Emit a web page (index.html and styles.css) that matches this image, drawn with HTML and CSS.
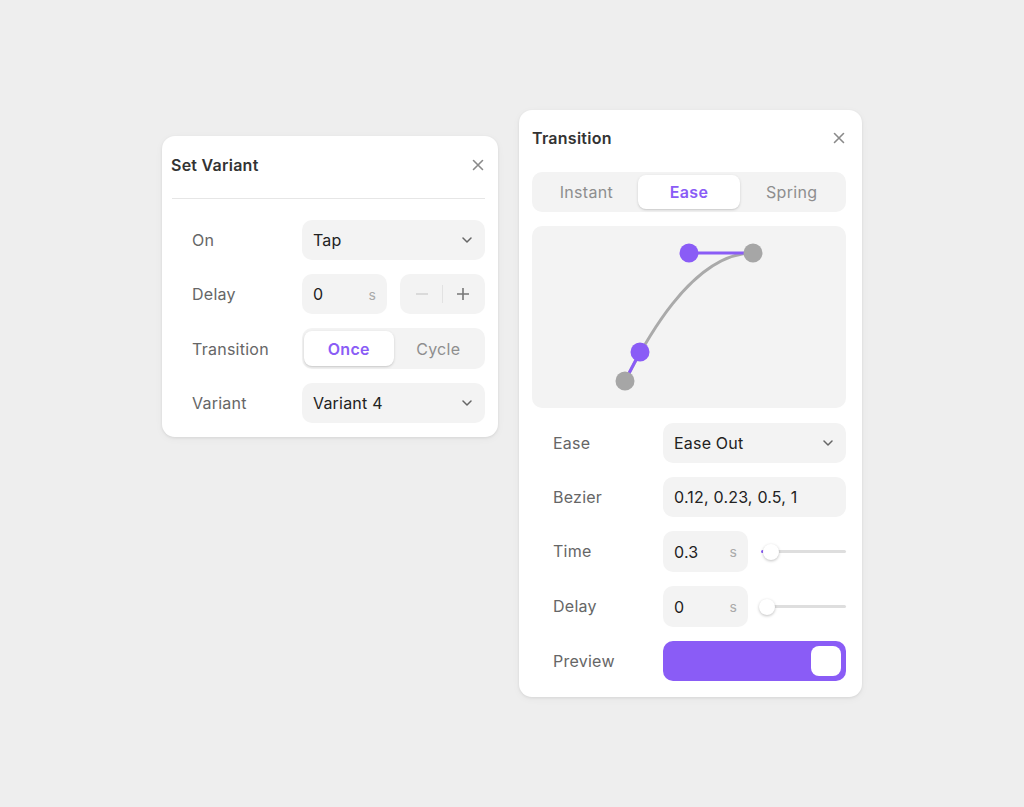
FILE: index.html
```html
<!DOCTYPE html>
<html>
<head>
<meta charset="utf-8">
<link rel="stylesheet" href="styles.css">
</head>
<body>
<div class="stage">
  <div class="panel panel-left">
    <div class="header header-left">
      <div class="title">Set Variant</div>
      <svg class="close" width="12" height="12" viewBox="0 0 12 12"><path d="M1.5 1.5L10.5 10.5M10.5 1.5L1.5 10.5" stroke="#8a8a8a" stroke-width="1.6" stroke-linecap="round"/></svg>
    </div>
    <div class="divider"></div>
    <div class="rows rows-left">
      <div class="row">
        <div class="label">On</div>
        <div class="field select"><span>Tap</span><svg class="chev" width="10" height="6" viewBox="0 0 10 6"><path d="M1 1L5 5L9 1" stroke="#666" stroke-width="1.5" fill="none" stroke-linecap="round" stroke-linejoin="round"/></svg></div>
      </div>
      <div class="row">
        <div class="label">Delay</div>
        <div class="pair">
          <div class="field num"><span>0</span><span class="unit">s</span></div>
          <div class="field stepper">
            <svg width="14" height="14" viewBox="0 0 14 14"><path d="M1 7H13" stroke="#d2d2d2" stroke-width="1.5"/></svg>
            <div class="vsep"></div>
            <svg width="14" height="14" viewBox="0 0 14 14"><path d="M1 7H13M7 1V13" stroke="#777" stroke-width="1.6"/></svg>
          </div>
        </div>
      </div>
      <div class="row row-tall">
        <div class="label">Transition</div>
        <div class="seg seg2">
          <div class="seg-item active">Once</div>
          <div class="seg-item">Cycle</div>
        </div>
      </div>
      <div class="row">
        <div class="label">Variant</div>
        <div class="field select"><span>Variant 4</span><svg class="chev" width="10" height="6" viewBox="0 0 10 6"><path d="M1 1L5 5L9 1" stroke="#666" stroke-width="1.5" fill="none" stroke-linecap="round" stroke-linejoin="round"/></svg></div>
      </div>
    </div>
  </div>

  <div class="panel panel-right">
    <div class="header header-right">
      <div class="title">Transition</div>
      <svg class="close" width="12" height="12" viewBox="0 0 12 12"><path d="M1.5 1.5L10.5 10.5M10.5 1.5L1.5 10.5" stroke="#8a8a8a" stroke-width="1.6" stroke-linecap="round"/></svg>
    </div>
    <div class="seg seg3">
      <div class="seg-item">Instant</div>
      <div class="seg-item active">Ease</div>
      <div class="seg-item">Spring</div>
    </div>
    <div class="curve">
      <svg width="314" height="182" viewBox="0 0 314 182">
        <path d="M93 155C108 126 157 27 221 27" stroke="#aaaaaa" stroke-width="3" fill="none"/>
        <path d="M93 155L108 126" stroke="#8a5cf6" stroke-width="3"/>
        <path d="M221 27L157 27" stroke="#8a5cf6" stroke-width="3"/>
        <circle cx="93" cy="155" r="9.5" fill="#a6a6a6"/>
        <circle cx="221" cy="27" r="9.5" fill="#a6a6a6"/>
        <circle cx="108" cy="126" r="9.5" fill="#8a5cf6"/>
        <circle cx="157" cy="27" r="9.5" fill="#8a5cf6"/>
      </svg>
    </div>
    <div class="rows rows-right">
      <div class="row">
        <div class="label">Ease</div>
        <div class="field select"><span>Ease Out</span><svg class="chev" width="10" height="6" viewBox="0 0 10 6"><path d="M1 1L5 5L9 1" stroke="#666" stroke-width="1.5" fill="none" stroke-linecap="round" stroke-linejoin="round"/></svg></div>
      </div>
      <div class="row">
        <div class="label">Bezier</div>
        <div class="field"><span>0.12, 0.23, 0.5, 1</span></div>
      </div>
      <div class="row row-tall">
        <div class="label">Time</div>
        <div class="pair">
          <div class="field num"><span>0.3</span><span class="unit">s</span></div>
          <div class="slider"><div class="fill"></div><div class="thumb"></div><div class="track"></div></div>
        </div>
      </div>
      <div class="row row-tall">
        <div class="label">Delay</div>
        <div class="pair">
          <div class="field num"><span>0</span><span class="unit">s</span></div>
          <div class="slider slider-zero"><div class="thumb"></div><div class="track"></div></div>
        </div>
      </div>
      <div class="row">
        <div class="label">Preview</div>
        <div class="preview"><div class="knob"></div></div>
      </div>
    </div>
  </div>
</div>
</body>
</html>
```

FILE: styles.css
```css
* { box-sizing: border-box; }
html, body { margin: 0; padding: 0; }
body {
  background: #eeeeee;
  width: 1024px;
  height: 807px;
  font-family: Inter, "Noto Sans", sans-serif;
  color: #222;
  overflow: hidden;
}
.stage {
  display: flex;
  align-items: flex-start;
  padding: 110px 0 0 162px;
  gap: 21px;
}
.panel {
  background: #fff;
  border-radius: 13px;
  box-shadow: 0 1px 3px rgba(0,0,0,0.08), 0 2px 8px rgba(0,0,0,0.04);
}
.panel-left {
  width: 336px;
  margin-top: 26px;
  padding: 0 13px 14px 10px;
}
.panel-right {
  width: 343px;
  padding: 0 16px 16px 13px;
}
.header {
  display: flex;
  align-items: center;
  justify-content: space-between;
}
.header-left { height: 62px; padding-right: 1px; }
.header-right { height: 62px; padding-bottom: 6px; padding-right: 1px; }
.title {
  font-size: 16px;
  font-weight: 600;
  color: #333;
  letter-spacing: 0.25px;
}
.header-left .title { margin-top: -4px; margin-left: -1px; }
.header-left .close { margin-top: -4px; }
.divider { height: 1px; background: #e6e6e6; }
.rows { display: flex; flex-direction: column; gap: 14px; }
.rows-left { padding-top: 21px; }
.rows-right { padding-top: 15px; }
.row {
  display: flex;
  align-items: center;
  height: 40px;
}
.row-tall { height: 41px; }
.label {
  width: 130px;
  padding-left: 20px;
  font-size: 16px;
  letter-spacing: 0.25px;
  color: #666;
  flex: none;
}
.rows-right .row-tall .label { margin-top: -1px; }
.rows-right .label { width: 131px; padding-left: 21px; }
.field {
  flex: 1;
  height: 100%;
  background: #f3f3f3;
  border-radius: 10px;
  display: flex;
  align-items: center;
  padding: 0 12px 0 11px;
  font-size: 16px;
  letter-spacing: 0.2px;
  color: #222;
}
.select { justify-content: space-between; padding-right: 13px; }
.pair {
  flex: 1;
  height: 100%;
  display: flex;
  align-items: center;
  gap: 13px;
}
.num {
  flex: none;
  width: 85px;
  justify-content: space-between;
  padding-right: 11px;
}
.unit { font-size: 14px; color: #aaa; }
.stepper {
  justify-content: center;
  gap: 13px;
  padding: 0;
}
.vsep { width: 1px; height: 18px; background: #e2e2e2; }
.seg {
  background: #f3f3f3;
  border-radius: 10px;
  padding: 3px;
  display: flex;
}
.seg2 { flex: 1; height: 100%; padding: 3px 2px; }
.seg-item {
  flex: 1;
  display: flex;
  align-items: center;
  justify-content: center;
  font-size: 16px;
  letter-spacing: 0.3px;
  color: #8e8e8e;
  border-radius: 8px;
}
.seg-item.active {
  background: #fff;
  color: #8a5cf6;
  font-weight: 600;
  box-shadow: 0 1px 3px rgba(0,0,0,0.14), 0 1px 1px rgba(0,0,0,0.05);
}
.seg3 { height: 40px; }
.curve {
  margin-top: 14px;
  height: 182px;
  background: #f3f3f3;
  border-radius: 10px;
  overflow: hidden;
}
.curve svg { display: block; }
.slider {
  flex: 1;
  height: 16px;
  display: flex;
  align-items: center;
}
.fill {
  width: 3px;
  height: 3px;
  border-radius: 2px;
  background: #8a5cf6;
  flex: none;
}
.thumb {
  width: 16px;
  height: 16px;
  border-radius: 50%;
  background: #fff;
  box-shadow: 0 1px 3px rgba(0,0,0,0.25);
  flex: none;
  margin-left: -1px;
  position: relative;
  z-index: 1;
}
.slider-zero .thumb { margin-left: -2px; }
.track {
  flex: 1;
  height: 3px;
  background: #dedede;
  border-radius: 2px;
  margin-left: -2px;
}
.preview {
  flex: 1;
  height: 100%;
  background: #8a5cf6;
  border-radius: 10px;
  display: flex;
  align-items: center;
  justify-content: flex-end;
  padding-right: 5px;
}
.knob {
  width: 30px;
  height: 30px;
  background: #fff;
  border-radius: 8px;
}
```
